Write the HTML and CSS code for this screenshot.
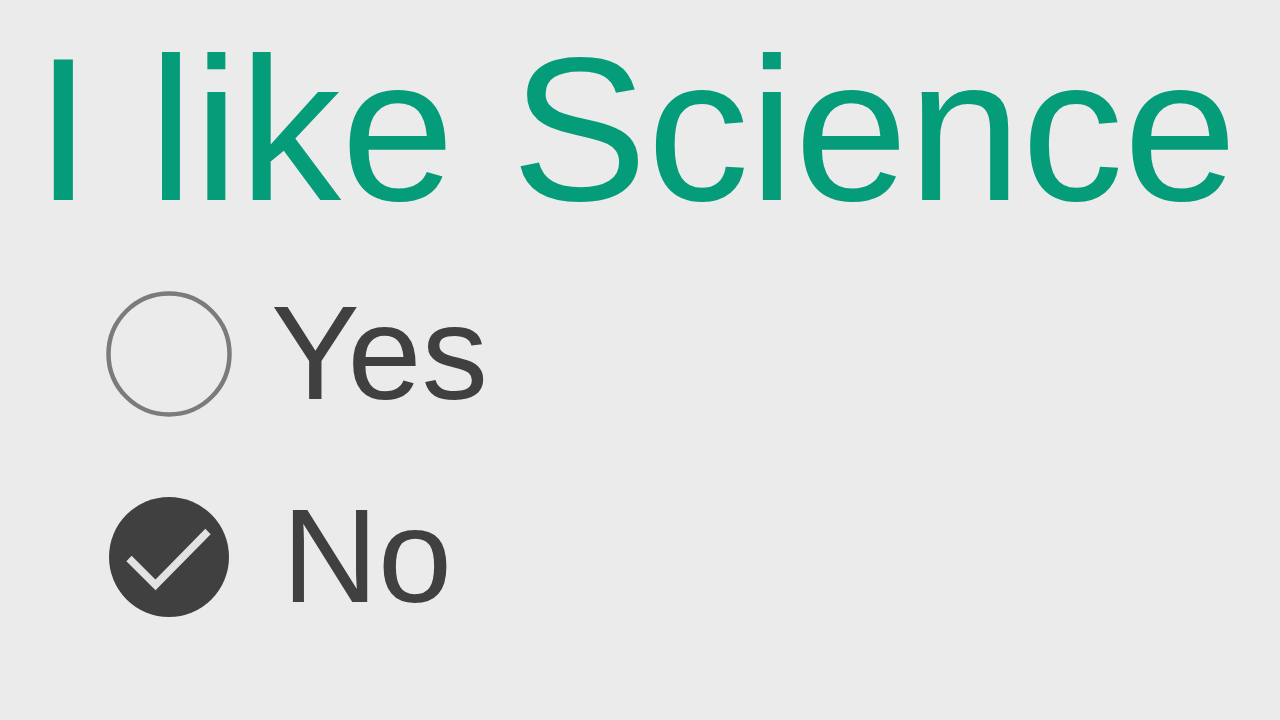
FILE: index.html
```html
<!DOCTYPE html>
<html>
<head>
<meta charset="utf-8">
<link rel="stylesheet" href="styles.css">
</head>
<body>
<div class="page">
  <h1 class="title">I like Science</h1>
  <div class="options">
    <div class="option">
      <div class="icon-cell">
        <svg class="radio" width="126" height="126" viewBox="0 0 126 126">
          <circle cx="63" cy="63" r="60.5" fill="none" stroke="#7b7b7b" stroke-width="4.5"/>
        </svg>
      </div>
      <span class="label label-yes">Yes</span>
    </div>
    <div class="option">
      <div class="icon-cell">
        <svg class="radio" width="120" height="120" viewBox="0 0 120 120">
          <circle cx="60" cy="60" r="60" fill="#404040"/>
          <polyline points="20,61.5 46.5,88 99,34.5" fill="none" stroke="#e2e2e2" stroke-width="7.5"/>
        </svg>
      </div>
      <span class="label label-no">No</span>
    </div>
  </div>
</div>
</body>
</html>
```

FILE: styles.css
```css
html, body {
  margin: 0;
  padding: 0;
  background: #ebebeb;
}
.page {
  width: 1280px;
  height: 720px;
  overflow: hidden;
  font-family: "Liberation Sans", Arial, sans-serif;
}
.title {
  margin: 27px 0 0 35px;
  font-size: 204px;
  line-height: 204px;
  font-weight: normal;
  color: #059c7a;
  white-space: nowrap;
}
.options {
  margin-top: 21px;
  display: flex;
  flex-direction: column;
}
.option {
  height: 203px;
  display: flex;
  align-items: center;
}
.icon-cell {
  width: 128px;
  margin-left: 105px;
  display: flex;
  justify-content: center;
  align-items: center;
}
.radio {
  display: block;
}
.label {
  font-size: 133px;
  line-height: 133px;
  color: #404040;
}
.label-yes {
  margin-left: 38px;
}
.label-no {
  margin-left: 49px;
}
```
